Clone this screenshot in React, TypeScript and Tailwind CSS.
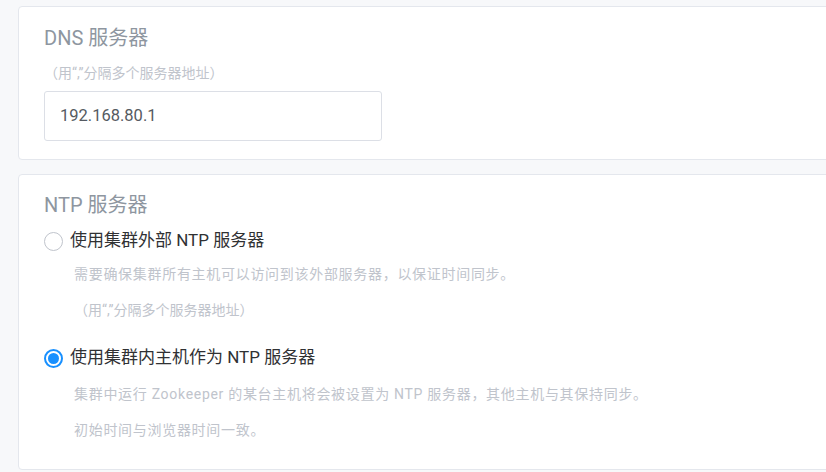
import React from 'react'

const font = { fontFamily: 'Roboto, "Noto Sans CJK SC", sans-serif' }

function Radio({ checked }: { checked: boolean }) {
  return checked ? (
    <span className="flex h-[19px] w-[19px] shrink-0 items-center justify-center rounded-full border-2 border-[#1890ff] bg-white">
      <span className="h-[11px] w-[11px] rounded-full bg-[#1890ff]" />
    </span>
  ) : (
    <span className="h-[19px] w-[19px] shrink-0 rounded-full border border-[#c0c4cc] bg-white" />
  )
}

export default function App() {
  return (
    <div className="min-h-[472px] w-[826px] overflow-hidden bg-[#f7f8fa] pl-[18px] pt-[6px]" style={font}>
      <div className="-mr-2 rounded-[4px] border border-[#e4e7ed] bg-white pl-[25px] pt-[17px] pb-[18px]">
        <div className="text-[20px] leading-[28px] text-[#8e96a0]">DNS 服务器</div>
        <div className="mt-[11px] text-[14px] leading-[20px] text-[#c0c4cc]">（用“,”分隔多个服务器地址）</div>
        <div className="mt-2 flex h-[50px] w-[338px] items-center rounded-[3px] border border-[#dcdfe6] px-[15px] text-[16.5px] text-[#555a61]">
          192.168.80.1
        </div>
      </div>

      <div className="-mr-2 mt-[14px] rounded-[4px] border border-[#e4e7ed] bg-white pl-[25px] pt-[16px] pb-[29px]">
        <div className="text-[20px] leading-[28px] text-[#8e96a0]">NTP 服务器</div>

        <label className="mt-[9px] flex h-[26px] items-center gap-[7px] text-[17px] text-[#303133]">
          <Radio checked={false} />
          使用集群外部 NTP 服务器
        </label>
        <div className="ml-[30px] mt-[10px] text-[14px] leading-[20px] tracking-[0.7px] text-[#c0c4cc]">
          需要确保集群所有主机可以访问到该外部服务器，以保证时间同步。
        </div>
        <div className="ml-[30px] mt-[16px] text-[14px] leading-[20px] text-[#c0c4cc]">（用“,”分隔多个服务器地址）</div>

        <label className="mt-[25px] flex h-[26px] items-center gap-[7px] text-[17px] text-[#303133]">
          <Radio checked />
          使用集群内主机作为 NTP 服务器
        </label>
        <div className="ml-[30px] mt-[13px] text-[14px] leading-[20px] tracking-[0.7px] text-[#c0c4cc]">
          集群中运行 Zookeeper 的某台主机将会被设置为 NTP 服务器，其他主机与其保持同步。
        </div>
        <div className="ml-[30px] mt-[16px] text-[14px] leading-[20px] tracking-[0.7px] text-[#c0c4cc]">初始时间与浏览器时间一致。</div>
      </div>
    </div>
  )
}
